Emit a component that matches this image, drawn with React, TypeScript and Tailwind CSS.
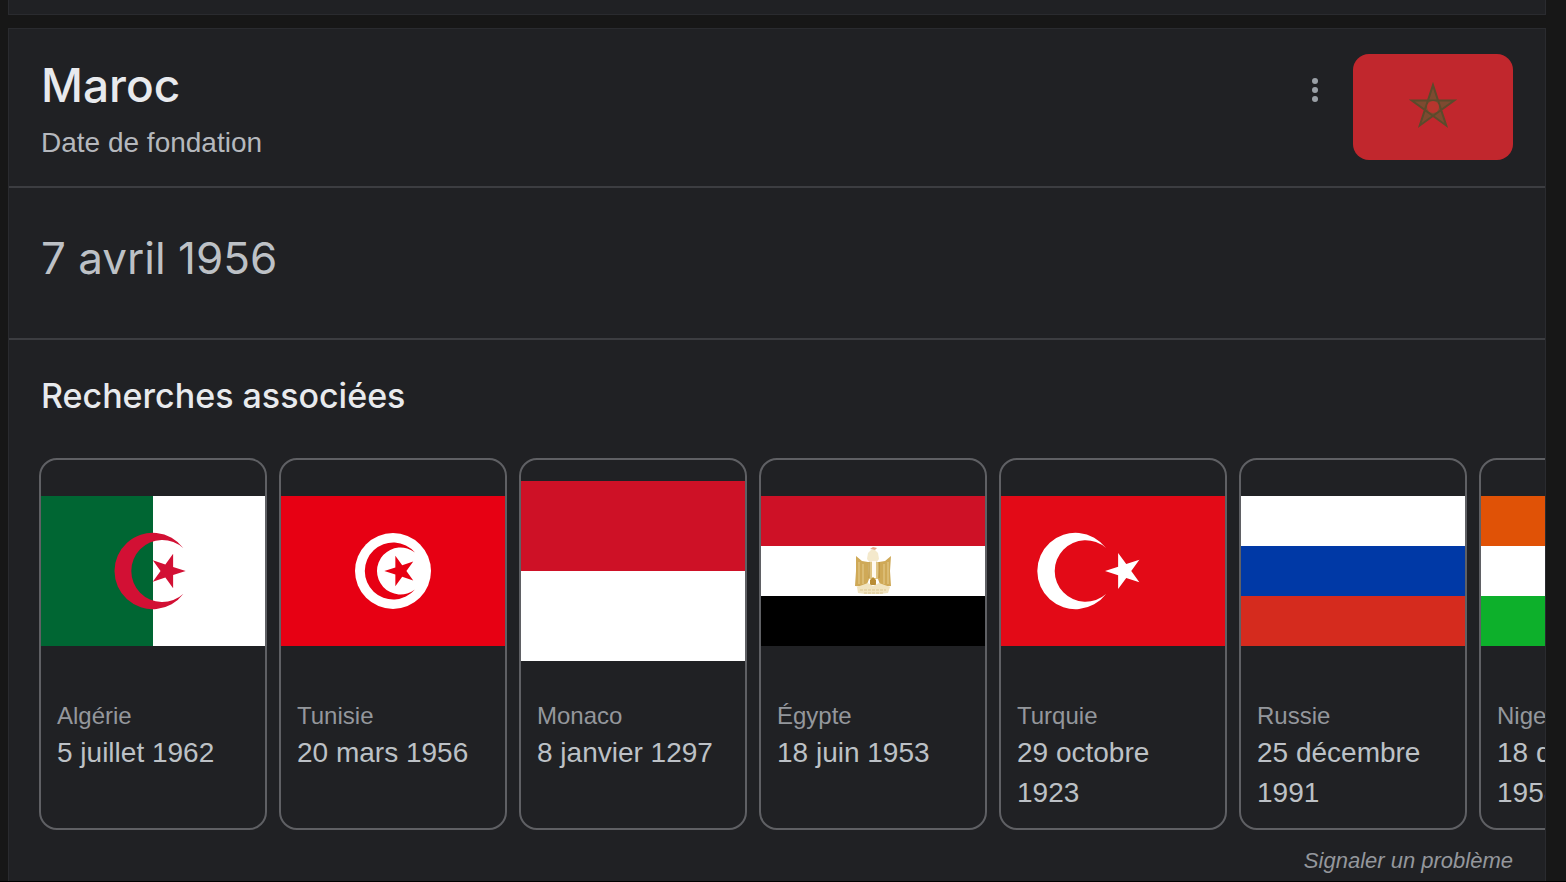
import React from 'react';

interface Related {
  name: string;
  date: string;
  flag: React.ReactNode;
}

function starPoints(cx: number, cy: number, r: number, rotation: number) {
  return Array.from({ length: 10 }, (_, i) => {
    const radius = i % 2 === 0 ? r : r * 0.382;
    const a = ((rotation + i * 36) * Math.PI) / 180;
    return `${cx + radius * Math.cos(a)},${cy + radius * Math.sin(a)}`;
  }).join(' ');
}

// Outer circle minus an inner circle shifted to the right
function crescentPath(x1: number, r1: number, x2: number, r2: number, cy: number) {
  const d = x2 - x1;
  const a = (r1 * r1 - r2 * r2 + d * d) / (2 * d);
  const h = Math.sqrt(r1 * r1 - a * a);
  const x = x1 + a;
  return `M${x} ${cy - h}A${r1} ${r1} 0 1 0 ${x} ${cy + h}A${r2} ${r2} 0 1 1 ${x} ${cy - h}Z`;
}

function Flag({ height = 150, children }: { height?: number; children: React.ReactNode }) {
  return (
    <svg viewBox={`0 0 224 ${height}`} className="block w-full" aria-hidden="true">
      {children}
    </svg>
  );
}

function Stripes({ colors, children }: { colors: string[]; children?: React.ReactNode }) {
  return (
    <Flag>
      {colors.map((color, i) => (
        <rect key={i} y={i * 50} width="224" height="50" fill={color} />
      ))}
      {children}
    </Flag>
  );
}

function Eagle() {
  return (
    <g>
      <path d="M107 57l3-3h4l3 3 1 6-3 4h-6l-3-4z" fill="#f4e9cc" />
      <path d="M109 53l3-2 4 1-2 2z" fill="#e8a88c" />
      <path d="M95 60l6 5 6 1 1 17-3 8-11-1 1-15z" fill="#cfa957" />
      <path d="M130 60l-6 5-6 1-1 17 3 8 10-1-1-15z" fill="#cfa957" />
      <path d="M98 66v22M102 68v20M127 66v22M123 68v20" stroke="#e6cd8f" fill="none" />
      <path d="M107 66h11l-1 17h-9z" fill="#dfc483" />
      <path d="M111 65h4v17h-4z" fill="#fffaf0" />
      <path d="M108 66v16M118 66v16" stroke="#b98d35" fill="none" />
      <path d="M109 84l3-3 3 3v5h-6z" fill="#b98d35" />
      <path d="M96 91l11-4 5 3 6-3 11 4-2 6-8 1H104l-7-1z" fill="#f1e4c0" />
      <path d="M99 94h26M103 97h19" stroke="#dcc68f" strokeDasharray="3 1" fill="none" />
    </g>
  );
}

const related: Related[] = [
  {
    name: 'Algérie',
    date: '5 juillet 1962',
    flag: (
      <Flag>
        <rect width="224" height="150" fill="#fff" />
        <rect width="112" height="150" fill="#006633" />
        <path d={crescentPath(111.7, 38.2, 121.3, 31, 75)} fill="#d21034" />
        <polygon points={starPoints(126.5, 75, 18.2, 0)} fill="#d21034" />
      </Flag>
    ),
  },
  {
    name: 'Tunisie',
    date: '20 mars 1956',
    flag: (
      <Flag>
        <rect width="224" height="150" fill="#e70013" />
        <circle cx="112" cy="75" r="38" fill="#fff" />
        <path d={crescentPath(112.3, 28.5, 119.5, 23.5, 75)} fill="#e70013" />
        <polygon points={starPoints(119.3, 75, 16, 180)} fill="#e70013" />
      </Flag>
    ),
  },
  {
    name: 'Monaco',
    date: '8 janvier 1297',
    flag: (
      <Flag height={180}>
        <rect width="224" height="180" fill="#fff" />
        <rect width="224" height="90" fill="#ce1126" />
      </Flag>
    ),
  },
  {
    name: 'Égypte',
    date: '18 juin 1953',
    flag: (
      <Stripes colors={['#ce1126', '#ffffff', '#000000']}>
        <Eagle />
      </Stripes>
    ),
  },
  {
    name: 'Turquie',
    date: '29 octobre 1923',
    flag: (
      <Flag>
        <rect width="224" height="150" fill="#e30a17" />
        <path d={crescentPath(74.5, 38.2, 84.5, 30.8, 75)} fill="#fff" />
        <polygon points={starPoints(123, 75, 19, 180)} fill="#fff" />
      </Flag>
    ),
  },
  {
    name: 'Russie',
    date: '25 décembre 1991',
    flag: <Stripes colors={['#ffffff', '#0039a6', '#d52b1e']} />,
  },
  {
    name: 'Niger',
    date: '18 décembre 1958',
    flag: (
      <Stripes colors={['#e05206', '#ffffff', '#0db02b']}>
        <circle cx="112" cy="75" r="21" fill="#e05206" />
      </Stripes>
    ),
  },
];

function MoroccoFlag() {
  return (
    <svg viewBox="0 0 160 106" className="block w-40 rounded-2xl" role="img" aria-label="Drapeau du Maroc">
      <rect width="160" height="106" fill="#c1272d" />
      <polygon points={starPoints(80, 53, 23, -90)} fill="#7d4a30" />
      <path
        d="M80 31L93.2 71.5L58.8 46.5H101.2L66.8 71.5Z"
        fill="none"
        stroke="#5b4a2b"
        strokeWidth="2"
      />
      <circle cx="80" cy="53" r="6" fill="#b9352e" />
    </svg>
  );
}

function RelatedCard({ name, date, flag }: Related) {
  return (
    <li className="flex w-[228px] shrink-0">
      <a href="#" className="flex w-full flex-col overflow-hidden rounded-[18px] border-2 border-[#5f6064]">
        <div className="flex h-[222px] items-center">{flag}</div>
        <div className="px-4 pt-[18px] pb-[15px]">
          <div className="text-2xl leading-8 text-[#94979c]">{name}</div>
          <div className="mt-px text-[28px] leading-10 text-[#bdc1c6]">{date}</div>
        </div>
      </a>
    </li>
  );
}

export default function App() {
  return (
    <div className="flex min-h-screen flex-col border-b border-black bg-[#171717] pr-5 pl-2 font-['Liberation_Sans',Arial,sans-serif]">
      <div className="mb-[13px] h-[15px] border border-t-0 border-[#2a2b2f] bg-[#202124]" />

      <main className="flex-1 border border-b-0 border-[#2a2b2f] bg-[#202124]">
        <header className="flex items-start border-b-2 border-[#3c3d41] px-8 pt-[25px] pb-[23px]">
          <div className="flex-1">
            <h1 className="font-[Inter,sans-serif] text-[46px] leading-[62px] font-medium text-[#e8eaed]">Maroc</h1>
            <p className="mt-[7px] text-[28px] leading-10 text-[#b5b8bd]">Date de fondation</p>
          </div>
          <button type="button" aria-label="Plus d'options" className="mt-4 mr-[18px] flex size-10 items-center justify-center">
            <svg viewBox="0 0 40 40" className="size-10" fill="#9aa0a6">
              <circle cx="20" cy="11" r="3" />
              <circle cx="20" cy="20" r="3" />
              <circle cx="20" cy="29" r="3" />
            </svg>
          </button>
          <MoroccoFlag />
        </header>

        <section className="border-b-2 border-[#3c3d41] px-8 pt-10 pb-[50px]">
          <p className="font-[Inter,sans-serif] text-[44px] leading-[60px] text-[#bdc1c6]">7 avril 1956</p>
        </section>

        <section>
          <h2 className="px-8 pt-8 pb-[38px] font-[Inter,sans-serif] text-[34px] leading-[48px] font-medium text-[#e8eaed]">
            Recherches associées
          </h2>
          <ul className="flex gap-3 overflow-hidden pl-[30px]">
            {related.map((item) => (
              <RelatedCard key={item.name} {...item} />
            ))}
          </ul>
          <div className="flex justify-end px-8 pt-[17px]">
            <a href="#" className="text-[22px] leading-7 text-[#94979c] italic">
              Signaler un problème
            </a>
          </div>
        </section>
      </main>
    </div>
  );
}
